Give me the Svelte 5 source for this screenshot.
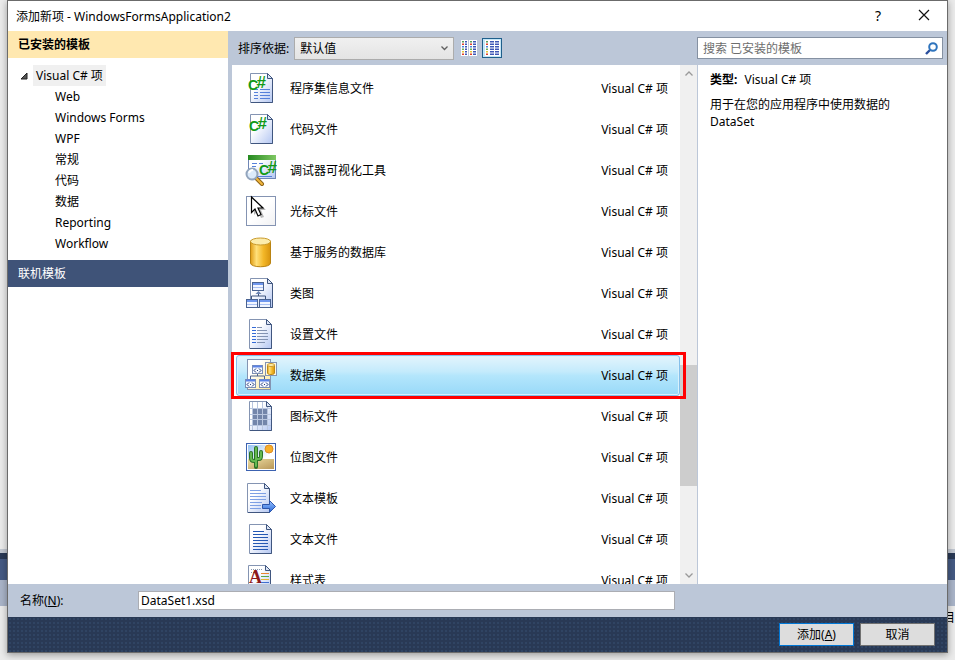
<script lang="ts">
  type Template = { name: string; icon: string }

  const categories = ['Web', 'Windows Forms', 'WPF', '常规', '代码', '数据', 'Reporting', 'Workflow']

  const templates: Template[] = [
    { name: '程序集信息文件', icon: 'assembly' },
    { name: '代码文件', icon: 'code' },
    { name: '调试器可视化工具', icon: 'visualizer' },
    { name: '光标文件', icon: 'cursor' },
    { name: '基于服务的数据库', icon: 'database' },
    { name: '类图', icon: 'diagram' },
    { name: '设置文件', icon: 'settings' },
    { name: '数据集', icon: 'dataset' },
    { name: '图标文件', icon: 'grid' },
    { name: '位图文件', icon: 'bitmap' },
    { name: '文本模板', icon: 'template' },
    { name: '文本文件', icon: 'text' },
    { name: '样式表', icon: 'style' }
  ]

  // bullets of the list-view glyphs, top to bottom
  const bullets = ['#5c9e5c', '#e0402c', '#4f86d8', '#6fae5a', '#e6c93a', '#e0402c']

  let selected = $state('数据集')
  let fileName = $state('DataSet1.xsd')
  let query = $state('')
</script>

{#snippet sheet(x: number)}
  <path d="M{x + 0.5} 1.5h17l5 5v24h-22z" fill="url(#paper)" stroke="#8494b2" />
  <path d="M{x + 1} 30.5h21.500v-24" fill="none" stroke="#40567f" />
  <path d="M{x + 17.5} 1.500v5h5z" fill="#dce5f5" stroke="#40567f" stroke-linejoin="round" />
{/snippet}

{#snippet csharp(x: number, y: number)}
  <text {x} {y} class="glyph" fill="#129a16">C<tspan class="sharp" dx="-2" dy="-2">#</tspan></text>
{/snippet}

{#snippet classBox(x: number, y: number)}
  <rect x={x + 0.5} y={y + 0.5} width="11" height="8" fill="#f1f5ff" stroke="#4a6391" />
  <path d="M{x + 1} {y + 2}h10" stroke="#6f97ee" stroke-width="2" />
  <path d="M{x + 1} {y + 5.5}h10" stroke="#a9c0f3" />
{/snippet}

{#snippet tableBox(x: number, y: number)}
  <rect x={x + 0.5} y={y + 0.5} width="10" height="8" fill="#f5f8ff" stroke="#7b8eb5" />
  <path d="M{x + 1} {y + 1.5}h9" stroke="#5b83e6" stroke-width="2" />
  <path d="M{x + 4} {y + 3.500}l-2 2 2 2M{x + 7} {y + 3.500}l2 2-2 2M{x + 5} {y + 5.5}h1" fill="none" stroke="#243b75" />
{/snippet}

{#snippet templateIcon(icon: string)}
  <svg class="icon" viewBox="0 0 32 32" aria-hidden="true">
    {#if icon === 'assembly'}
      {@render sheet(5)}
      <path d="M9 17.500h4M9 20.500h4M9 23.500h4M9 26.500h4M15 17.500h10M15 20.500h10M15 23.500h10M15 26.500h10" stroke="#5680da" />
      {@render csharp(3, 18)}
    {:else if icon === 'code'}
      {@render sheet(5)}
      {@render csharp(4, 18)}
    {:else if icon === 'visualizer'}
      <rect x="3.500" y="1.500" width="27" height="23" fill="url(#paper)" stroke="#6f86b6" />
      <rect x="3" y="1" width="28" height="5" fill="url(#green)" />
      <path d="M7 9.500h5M14 9.500h4M7 12.500h4M7 15.500h4M11 22.500h16" stroke="#5680da" />
      {@render csharp(14, 21)}
      <path d="M11 24l6 6" stroke="#8e6215" stroke-width="4" stroke-linecap="round" />
      <path d="M11 24l6 6" stroke="#f0b63e" stroke-width="2" stroke-linecap="round" />
      <circle cx="7" cy="20" r="5.500" fill="#dcebfb" stroke="#93a5bd" stroke-width="2" />
      <path d="M4 19q1-3 4-3" fill="none" stroke="#fff" stroke-width="2" />
    {:else if icon === 'cursor'}
      <rect x="1.500" y="1.500" width="29" height="29" fill="url(#blank)" stroke="#8493b2" />
      <path d="M9 5v15l4-4 3 7 3-1-3-7h5z" fill="#b8b8b8" />
      <path d="M6.500 2v15.500l3.500-3.500 3 7 3-1.500-3-6.500h5z" fill="#fff" stroke="#000" stroke-width="1.200" />
    {:else if icon === 'database'}
      <path d="M5.500 5v22c0 5 20 5 20 0V5z" fill="url(#gold)" stroke="#b98312" />
      <ellipse cx="15.500" cy="5.500" rx="10" ry="3.500" fill="#fcecab" stroke="#c99a2b" />
    {:else if icon === 'diagram'}
      {@render sheet(5)}
      {@render classBox(7, 5)}
      <path d="M13.500 19v-3M6.500 23v-4h14v4" fill="none" stroke="#3e547e" />
      <path d="M13.500 14l3 3h-6z" fill="#6c84b1" />
      {@render classBox(1, 22)}
      {@render classBox(14, 22)}
    {:else if icon === 'settings'}
      {@render sheet(4)}
      <path d="M7 9.500h4M7 12.500h4M7 15.500h4M7 18.500h4M7 21.500h4M7 24.500h4" stroke="#346bd8" />
      <path d="M12 9.500h5M12 12.500h10M12 15.500h11M12 18.500h11M12 21.500h11M12 24.500h8" stroke="#8292b2" />
    {:else if icon === 'dataset'}
      <rect x="2.500" y=".500" width="23" height="30" fill="url(#cream)" stroke="#8494b2" />
      <path d="M12.500 14v3M5.500 20v-3h14v3" fill="none" stroke="#4d628d" />
      {@render tableBox(7, 6)}
      {@render tableBox(0, 20)}
      {@render tableBox(14, 20)}
      <rect x="20.500" y="3.500" width="11" height="13" fill="#fff8dc" stroke="#8494b2" />
      <path d="M22.500 6v8c0 2 7 2 7 0V6z" fill="url(#gold)" stroke="#bd8814" />
      <ellipse cx="26" cy="6" rx="3.500" ry="1.500" fill="#fff0ad" stroke="#c9992b" />
    {:else if icon === 'grid'}
      {@render sheet(4)}
      <path d="M8 9h15v16H8z" fill="#7385aa" />
      <path d="M7.500 2v28M12.500 2v28M17.500 2v28M22.500 7v23M5 8.500h21M5 14.500h21M5 19.500h21M5 25.500h21" stroke="#b9c6df" />
    {:else if icon === 'bitmap'}
      <rect x="1.500" y="2.500" width="29" height="27" fill="url(#sky)" stroke="#3c62b0" />
      <path d="M3 18h26v10H3z" fill="url(#sand)" />
      <path d="M2.500 3.500h27v25h-27z" fill="none" stroke="#fff" />
      <circle cx="24" cy="8" r="4" fill="#f8b02b" stroke="#de8d27" />
      <path d="M11 26V7M11 20H9q-3 0-3-3v-5M12 18h2q2 0 2-3v-4" fill="none" stroke="#2c7228" stroke-width="4" stroke-linecap="round" />
      <path d="M11 25V7M10 20H9q-3 0-3-3v-5M12 18h2q2 0 2-3v-4" fill="none" stroke="#65b951" stroke-width="2" stroke-linecap="round" />
    {:else if icon === 'template'}
      {@render sheet(2)}
      <path d="M5 8.500h11M5 11.500h16M5 14.500h16M5 17.500h16M5 20.500h12M5 23.500h11M5 26.500h11" stroke="#7ea0e4" />
      <path d="M17.500 22.500h7v-4l6 6-6 6v-4h-7z" fill="url(#arrow)" stroke="#2e56aa" />
    {:else if icon === 'text'}
      {@render sheet(4)}
      <path d="M8 8.500h11M8 11.500h15M8 14.500h15M8 17.500h15M8 20.500h15M8 23.500h15M8 26.500h15" stroke="#2458b3" />
    {:else if icon === 'style'}
      {@render sheet(3)}
      <path d="M6 5.500h11M6 8.500h3" stroke="#8997af" stroke-dasharray="1 1" />
      <text x="4" y="19" class="serif" fill="#8e1919">A</text>
      <path d="M16 9.500h8" stroke="#e88531" />
      <path d="M16 12.500h8" stroke="#56a64b" />
      <path d="M16 15.500h8" stroke="#e0b535" />
      <path d="M16 18.500h8M6 22.500h18" stroke="#3f6fce" />
    {/if}
  </svg>
{/snippet}

<svg class="defs" aria-hidden="true">
  <defs>
    <linearGradient id="paper" x2="1" y2="1"><stop offset=".35" stop-color="#fff" /><stop offset="1" stop-color="#b3c6f2" /></linearGradient>
    <linearGradient id="blank" x2="1" y2="1"><stop offset=".5" stop-color="#fff" /><stop offset="1" stop-color="#f0f0f2" /></linearGradient>
    <linearGradient id="cream" x2="1" y2="1"><stop offset=".3" stop-color="#fff" /><stop offset="1" stop-color="#ffe78f" /></linearGradient>
    <linearGradient id="green" x2="1"><stop stop-color="#24891f" /><stop offset="1" stop-color="#7fc763" /></linearGradient>
    <linearGradient id="gold" x2="1"><stop stop-color="#e09c14" /><stop offset=".3" stop-color="#ffe07a" /><stop offset=".65" stop-color="#f3b728" /><stop offset="1" stop-color="#d8940e" /></linearGradient>
    <linearGradient id="sky" x2="1" y2="1"><stop stop-color="#8bbcf2" /><stop offset=".6" stop-color="#fff" /></linearGradient>
    <linearGradient id="sand" x2="1" y2="1"><stop stop-color="#eddca0" /><stop offset="1" stop-color="#b8985a" /></linearGradient>
    <linearGradient id="arrow" x2="0" y2="1"><stop stop-color="#9dc5ff" /><stop offset="1" stop-color="#2465d8" /></linearGradient>
  </defs>
</svg>

<div class="desktop">
  <span class="behind" aria-hidden="true">目</span>
  <div class="dialog" role="dialog" aria-labelledby="title">
    <header class="titlebar">
      <h1 id="title">添加新项 - WindowsFormsApplication2</h1>
      <button class="caption" aria-label="帮助">?</button>
      <button class="caption" aria-label="关闭">
        <svg width="12" height="12" viewBox="0 0 12 12"><path d="M1 1l10 10M11 1L1 11" stroke="#111" stroke-width="1.200" /></svg>
      </button>
    </header>

    <div class="main">
      <nav class="sidebar">
        <h2 class="installed">已安装的模板</h2>
        <ul class="tree">
          <li class="root">
            <svg width="8" height="8" viewBox="0 0 8 8"><path d="M7 1v6H1z" fill="#555" stroke="#222" /></svg>
            <a href="#csharp">Visual C# 项</a>
          </li>
          {#each categories as category}
            <li><a href="#{category}">{category}</a></li>
          {/each}
        </ul>
        <h2 class="online">联机模板</h2>
      </nav>

      <section class="content">
        <div class="toolbar">
          <label for="sort">排序依据:</label>
          <div class="sort">
            <select id="sort"><option>默认值</option></select>
            <svg width="7" height="5" viewBox="0 0 7 5"><path d="M.5.500l3 3 3-3" fill="none" stroke="#606060" stroke-width="1.300" /></svg>
          </div>
          <button class="view" aria-label="小图标">
            <svg width="16" height="16" viewBox="0 0 16 16">
              <path fill="#fff" d="M0 0h7v16H0zM8 0h8v16H8z" />
              {#each bullets as fill, i}
                <path d="M1 {1 + i * 2.5}h2v1.500H1zM9 {1 + i * 2.5}h2v1.500H9z" {fill} />
                <path d="M4 {1 + i * 2.5}h2v1.500H4zM12 {1 + i * 2.5}h3v1.500h-3z" fill="#3f57b5" />
              {/each}
            </svg>
          </button>
          <button class="view active" aria-label="中等图标">
            <svg width="16" height="16" viewBox="0 0 16 16">
              <path fill="#fff" d="M1 0h15v16H1z" />
              {#each bullets as fill, i}
                <path d="M2 {1 + i * 2.5}h2v1.500H2z" {fill} />
                <path d="M6 {1 + i * 2.5}h4v1.500H6zM11 {1 + i * 2.5}h4v1.500h-4z" fill="#3f57b5" />
              {/each}
            </svg>
          </button>
          <div class="search">
            <input type="search" bind:value={query} placeholder="搜索 已安装的模板" aria-label="搜索 已安装的模板" />
            <svg width="13" height="13" viewBox="0 0 13 13">
              <path d="M5 8l-4 4" stroke="#2a4f9d" stroke-width="2.400" />
              <circle cx="8" cy="5" r="3.800" fill="#fff" stroke="#2f74bd" stroke-width="2" />
            </svg>
          </div>
        </div>

        <div class="panes">
          <ul class="templates">
            {#each templates as template}
              <li>
                <button class="row" class:selected={selected === template.name} onclick={() => (selected = template.name)}>
                  {@render templateIcon(template.icon)}
                  <span class="name">{template.name}</span>
                  <span>Visual C# 项</span>
                </button>
                {#if selected === template.name}
                  <span class="highlight"></span>
                {/if}
              </li>
            {/each}
          </ul>
          <div class="scrollbar" aria-hidden="true">
            <svg width="8" height="5" viewBox="0 0 8 5"><path d="M.5 4.500L4 1l3.500 3.500" fill="none" stroke="#999" stroke-width="1.300" /></svg>
            <div class="track"><span class="above"></span><span class="thumb"></span><span class="below"></span></div>
            <svg width="8" height="5" viewBox="0 0 8 5"><path d="M.5.500L4 4 7.500.500" fill="none" stroke="#999" stroke-width="1.300" /></svg>
          </div>
          <aside class="details">
            <p><b>类型:</b> Visual C# 项</p>
            <p>用于在您的应用程序中使用数据的 DataSet</p>
          </aside>
        </div>
      </section>
    </div>

    <div class="namebar">
      <label for="name">名称(<u>N</u>):</label>
      <input id="name" type="text" bind:value={fileName} />
    </div>

    <footer class="actions">
      <button class="default">添加(<u>A</u>)</button>
      <button>取消</button>
    </footer>
  </div>
</div>

<style>
  :global(body) {
    font-family: "Noto Sans", "Noto Sans CJK SC", sans-serif;
    font-size: 12px;
    line-height: 17px;
    color: #000;
  }

  * {
    box-sizing: border-box;
  }

  h1, h2, p, ul {
    margin: 0;
    padding: 0;
    font-size: 12px;
    font-weight: 400;
    list-style: none;
  }

  a {
    color: inherit;
    text-decoration: none;
  }

  button, input, select {
    font: inherit;
    color: inherit;
    margin: 0;
    padding: 0;
  }

  button, svg {
    flex: none;
  }

  .defs {
    position: absolute;
    width: 0;
    height: 0;
  }

  .desktop {
    position: relative;
    display: flex;
    height: 100vh;
    padding: 0 7px 7px;
    overflow: hidden;
    background: linear-gradient(to top, #ebebeb 54px, #a9b4c8 54px 80px, #455a83 80px 101px, #293955 101px 107px, #c2c8d2 107px 111px, #ebebeb 111px);
  }

  .behind {
    position: absolute;
    right: 0;
    bottom: 34px;
  }

  .dialog {
    position: relative;
    flex: 1;
    min-width: 0;
    display: flex;
    flex-direction: column;
    border: 1px solid #6b6b6b;
    background: #fff;
    box-shadow: 0 2px 7px rgba(0, 0, 0, 0.35);
  }

  .titlebar {
    display: flex;
    align-items: center;
    height: 30px;
    padding-left: 8px;
  }

  .titlebar h1 {
    flex: 1;
  }

  .caption {
    width: 46px;
    height: 30px;
    border: 0;
    background: none;
    font-size: 14px;
    line-height: 14px;
  }

  .caption svg {
    vertical-align: top;
  }

  .main {
    flex: 1;
    min-height: 0;
    display: flex;
  }

  .sidebar {
    flex: none;
    width: 220px;
  }

  .installed, .online {
    height: 27px;
    padding-left: 10px;
    line-height: 27px;
  }

  .installed {
    background: #ffe8b0;
    font-weight: 700;
  }

  .online {
    background: #3f5378;
    color: #fff;
  }

  .tree {
    padding: 7px 0 6px;
  }

  .tree li {
    padding-left: 47px;
    line-height: 21px;
  }

  .tree .root {
    display: flex;
    align-items: center;
    gap: 5px;
    padding-left: 12px;
  }

  .root a {
    padding: 0 3px;
    background: #f0f0f0;
  }

  .content {
    flex: 1;
    min-width: 0;
    display: flex;
    flex-direction: column;
    border-left: 4px solid #bcc7d8;
  }

  .toolbar {
    display: flex;
    align-items: center;
    height: 34px;
    padding: 0 4px 0 6px;
    background: #bcc7d8;
  }

  .sort {
    display: flex;
    align-items: center;
    width: 160px;
    margin: 0 5px;
  }

  .sort select {
    width: 160px;
    height: 23px;
    padding-left: 5px;
    border: 1px solid #acacac;
    border-radius: 0;
    background: linear-gradient(#f0f0f0, #e4e4e4);
    appearance: none;
  }

  .sort svg {
    margin-left: -13px;
    pointer-events: none;
  }

  .view {
    display: grid;
    place-items: center;
    width: 20px;
    height: 20px;
    margin-right: 3px;
    border: 0;
    background: none;
  }

  .view.active {
    border: 1px solid #1f5f8b;
    background: #c4e5f6;
  }

  .search {
    display: flex;
    align-items: center;
    width: 246px;
    height: 22px;
    margin-left: auto;
    padding: 0 4px 0 5px;
    border: 1px solid #8591a2;
    background: #fff;
  }

  .search input {
    flex: 1;
    min-width: 0;
    border: 0;
    outline: 0;
    background: none;
    appearance: none;
  }

  .search input::placeholder {
    color: #6d6d6d;
  }

  .panes {
    flex: 1;
    min-height: 0;
    display: flex;
  }

  .templates {
    flex: 1;
    min-width: 0;
    padding: 3px 0 0 4px;
    /* the mark round the selected row reaches past the list's edge */
    clip-path: inset(0 -8px 0 -8px);
    z-index: 1;
  }

  .templates li {
    position: relative;
  }

  .row {
    display: flex;
    align-items: center;
    width: 100%;
    height: 41px;
    padding: 0 11px 0 8px;
    border: 1px solid transparent;
    background: none;
    text-align: left;
  }

  .row.selected {
    border-color: #84bfea;
    border-radius: 3px;
    background: linear-gradient(#e3f4fc, #c4ebfc 40%, #b4e6fc 50%, #98d9f8);
    box-shadow: inset 0 0 0 1px #d8f1fd;
  }

  .icon {
    width: 32px;
    height: 32px;
    margin-bottom: 1px;
  }

  .glyph {
    font: bold 14px/1 "Liberation Sans", sans-serif;
  }

  .sharp {
    font-size: 17px;
    font-style: italic;
  }

  .serif {
    font: bold 18px/1 "Liberation Serif", serif;
  }

  .name {
    flex: 1;
    padding-left: 13px;
  }

  .highlight {
    position: absolute;
    inset: -3px -6px -3px -5px;
    border: 3px solid #f00;
    pointer-events: none;
  }

  .scrollbar {
    display: flex;
    flex-direction: column;
    align-items: center;
    width: 17px;
    padding: 6px 0;
    background: #f0f0f0;
  }

  .track {
    flex: 1;
    align-self: stretch;
    display: flex;
    flex-direction: column;
    margin: 6px 0;
  }

  .above {
    flex: 283;
  }

  .thumb {
    flex: 121;
    background: #cdcdcd;
  }

  .below {
    flex: 81;
  }

  .details {
    width: 250px;
    padding: 6px 52px 0 12px;
    border-left: 1px solid #bcc7d8;
  }

  .details p {
    margin-bottom: 8px;
  }

  .details b {
    margin-right: 4px;
  }

  .namebar {
    display: flex;
    align-items: center;
    height: 33px;
    padding: 0 272px 0 12px;
    background: #bcc7d8;
  }

  .namebar label {
    width: 118px;
  }

  .namebar input {
    flex: 1;
    min-width: 0;
    height: 19px;
    padding: 0 2px;
    border: 1px solid #abadb3;
    background: #fff;
  }

  .actions {
    display: flex;
    align-items: center;
    justify-content: flex-end;
    gap: 6px;
    height: 35px;
    padding-right: 12px;
    background: radial-gradient(#304463 1px, transparent 1px) 0 0 / 4px 4px, #293955;
  }

  .actions button {
    width: 75px;
    height: 23px;
    border: 1px solid #707070;
    background: #ddd;
  }

  .actions .default {
    border-color: #0078d7;
  }
</style>
